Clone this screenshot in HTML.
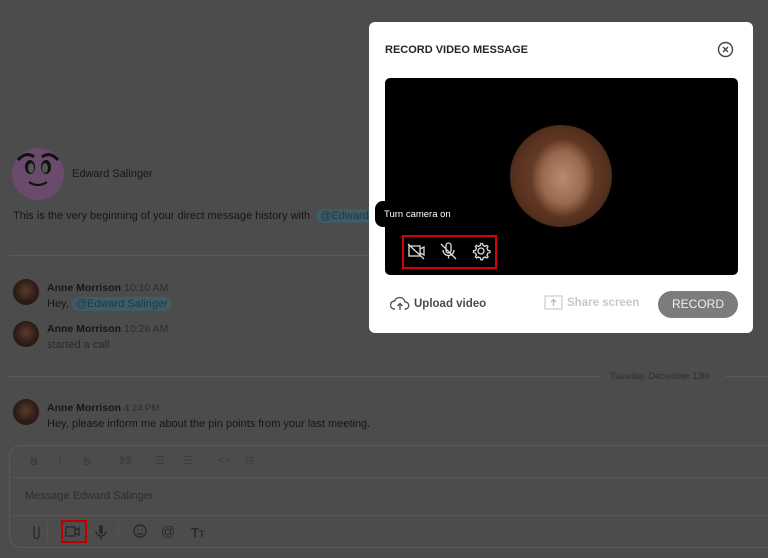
<!DOCTYPE html>
<html><head><meta charset="utf-8"><style>
body{margin:0;width:768px;height:558px;background:#4c4c4c;font-family:"Liberation Sans",sans-serif;position:relative;overflow:hidden;color:#161616}
.a{position:absolute}
.t{font-size:11px;white-space:nowrap}
.mention{background:#3f5b63;color:#1b3d47;border-radius:8px;padding:1px 4px}
.av{width:26px;height:26px;border-radius:50%;background:radial-gradient(circle at 50% 45%,#5a3a2c 0,#2e1d16 55%,#1a1210 100%)}
.ic{stroke:#2a2a2a;fill:none;stroke-width:1.4}
</style></head><body>
<div class="a" style="left:12px;top:148px;width:52px;height:52px;border-radius:50%;background:#6b4b6b"></div>
<svg class="a" style="left:12px;top:148px" width="52" height="52"><path d="M6 12 Q14 3 22 9 M30 9 Q38 3 46 12" stroke="#111" stroke-width="3" fill="none"/><ellipse cx="18" cy="19" rx="5" ry="7" fill="#111"/><ellipse cx="34" cy="19" rx="5" ry="7" fill="#111"/><ellipse cx="19" cy="20" rx="3" ry="5" fill="#555"/><ellipse cx="33" cy="20" rx="3" ry="5" fill="#555"/><path d="M17 34 Q26 40 35 34" stroke="#111" stroke-width="2" fill="none"/></svg>
<div class="a t" style="left:72px;top:168px;font-size:11px">Edward Salinger</div>
<div class="a t" style="left:13px;top:210px">This is the very beginning of your direct message history with &nbsp;<span class="mention">@Edward</span></div>
<div class="a" style="left:10px;top:255px;width:360px;height:1px;background:#595959"></div>
<div class="av a" style="left:13px;top:279px"></div>
<div class="a t" style="left:47px;top:282px;font-weight:bold;font-size:10.5px">Anne Morrison <span style="font-weight:normal;color:#2c2c2c">10:10 AM</span></div>
<div class="a t" style="left:47px;top:298px">Hey, <span class="mention">@Edward Salinger</span></div>
<div class="av a" style="left:13px;top:321px"></div>
<div class="a t" style="left:47px;top:323px;font-weight:bold;font-size:10.5px">Anne Morrison <span style="font-weight:normal;color:#2c2c2c">10:26 AM</span></div>
<div class="a t" style="left:47px;top:339px;color:#2a2a2a">started a call</div>
<div class="a" style="left:8px;top:376px;width:592px;height:1px;background:#595959"></div>
<div class="a t" style="left:610px;top:371px;font-size:9px;color:#2e2e2e">Tuesday, December 13th</div>
<div class="a" style="left:725px;top:376px;width:43px;height:1px;background:#595959"></div>
<div class="av a" style="left:13px;top:399px"></div>
<div class="a t" style="left:47px;top:402px;font-weight:bold;font-size:10.5px">Anne Morrison <span style="font-weight:normal;color:#2c2c2c;font-size:9.5px">4:24 PM</span></div>
<div class="a t" style="left:47px;top:418px">Hey, please inform me about the pin points from your last meeting.</div>
<div class="a" style="left:9px;top:445px;width:780px;height:101px;border:1px solid #5a5a5a;border-radius:12px"></div>
<div class="a" style="left:10px;top:477px;width:760px;height:1px;background:#555"></div>
<div class="a" style="left:10px;top:515px;width:760px;height:1px;background:#555"></div>
<div class="a t" style="left:30px;top:456px;color:#3c3c3c;font-weight:bold">B</div>
<div class="a t" style="left:58px;top:456px;color:#3c3c3c;font-style:italic;font-family:'Liberation Serif'">I</div>
<div class="a t" style="left:83px;top:456px;color:#3c3c3c;text-decoration:line-through">S</div>
<div class="a t" style="left:119px;top:455px;color:#3c3c3c;font-weight:bold">99</div>
<div class="a t" style="left:155px;top:454px;color:#3c3c3c">☰</div>
<div class="a t" style="left:183px;top:454px;color:#3c3c3c">☰</div>
<div class="a t" style="left:218px;top:455px;color:#3c3c3c">&lt;&gt;</div>
<div class="a t" style="left:245px;top:454px;color:#3c3c3c">⊟</div>
<div class="a t" style="left:25px;top:490px;color:#2e2e2e">Message Edward Salinger</div>
<svg class="a" style="left:28px;top:522px" width="200" height="20"><path class="ic" d="M8 4 v10 a2.5 2.5 0 0 0 5 0 v-9" transform="translate(-2,0)"/>
<rect x="38" y="5" width="9" height="9" class="ic"/><path d="M47 8 l4 -2 v7 l-4 -2" class="ic"/>
<rect x="71" y="3" width="4" height="9" rx="2" fill="#2a2a2a"/><path d="M68 9 a5 5 0 0 0 10 0 M73 14 v4" class="ic"/>
<circle cx="112" cy="9" r="6" class="ic"/><circle cx="110" cy="8" r=".8" fill="#2a2a2a"/><circle cx="114" cy="8" r=".8" fill="#2a2a2a"/><path d="M109 11 q3 2.5 6 0" class="ic"/>
<text x="133" y="14" font-size="14" fill="#2a2a2a" font-family="Liberation Sans">@</text>
<text x="163" y="15" font-size="13" font-weight="bold" fill="#2a2a2a" font-family="Liberation Sans">T</text><text x="171" y="15" font-size="9" font-weight="bold" fill="#2a2a2a" font-family="Liberation Sans">T</text></svg>
<div class="a" style="left:61px;top:520px;width:22px;height:19px;border:2px solid #c00000"></div>
<div class="a" style="left:47px;top:522px;width:1px;height:18px;background:#555"></div>
<div class="a" style="left:118px;top:522px;width:1px;height:18px;background:#555"></div>
<div class="a" style="left:369px;top:22px;width:384px;height:311px;background:#fff;border-radius:6px"></div>
<div class="a t" style="left:385px;top:44px;font-weight:bold;font-size:11px;color:#262626">RECORD VIDEO MESSAGE</div>
<svg class="a" style="left:717px;top:41px" width="17" height="17"><circle cx="8.5" cy="8.5" r="7" stroke="#444" stroke-width="1.4" fill="none"/><path d="M6 6 l5 5 M11 6 l-5 5" stroke="#444" stroke-width="1.4"/></svg>
<div class="a" style="left:385px;top:78px;width:353px;height:197px;background:#000;border-radius:5px"></div>
<div class="a" style="left:510px;top:125px;width:102px;height:102px;border-radius:50%;background:radial-gradient(ellipse 45% 55% at 52% 52%,#b98a70 0,#9a6a50 45%,transparent 70%),radial-gradient(circle at 50% 50%,#7a4a2c 0,#5a3320 60%,#2a1a10 100%)"></div>
<div class="a" style="left:375px;top:201px;width:80px;height:26px;background:#000;border-radius:8px"></div>
<div class="a t" style="left:384px;top:209px;color:#fff;font-size:9.5px">Turn camera on</div>
<div class="a" style="left:402px;top:235px;width:91px;height:30px;border:2px solid #d00"></div>
<svg class="a" style="left:404px;top:237px" width="90" height="30"><g stroke="#ddd" stroke-width="1.3" fill="none"><rect x="5" y="9" width="11" height="10"/><path d="M16 12 l4 -2 v8 l-4 -2 M4 7 l16 15"/>
<rect x="42" y="6" width="5" height="10" rx="2.5"/><path d="M39 13 a5.5 5.5 0 0 0 11 0 M44.5 18.5 v3 M37 7 l15 15"/>
<circle cx="77" cy="14" r="3"/><path d="M77 6.5 l1.5 0 l.6 2 l2 .9 l1.8-1 l1.1 1.1 -1 1.8 .9 2 2 .6 v1.6 l-2 .6 -.9 2 1 1.8 -1.1 1.1 -1.8-1 -2 .9 -.6 2 h-1.6 l-.6-2 -2-.9 -1.8 1 -1.1-1.1 1-1.8 -.9-2 -2-.6 v-1.6 l2-.6 .9-2 -1-1.8 1.1-1.1 1.8 1 2-.9 .6-2z"/></g></svg>
<svg class="a" style="left:390px;top:296px" width="20" height="16"><path d="M5 13 h-0.5 a4 4 0 0 1 0-8 a5.5 5.5 0 0 1 10.5 1 a3.5 3.5 0 0 1 0.5 7 h-1" stroke="#555" stroke-width="1.4" fill="none"/><path d="M10 14 v-6 M7.5 10 l2.5-2.5 2.5 2.5" stroke="#555" stroke-width="1.4" fill="none"/></svg>
<div class="a t" style="left:414px;top:298px;font-weight:bold;font-size:11.5px;color:#4a4a4a">Upload video</div>
<svg class="a" style="left:544px;top:295px" width="20" height="16"><rect x="1" y="1" width="17" height="13" stroke="#ccc" stroke-width="1.2" fill="none"/><path d="M9.5 11 v-6 M7 7 l2.5-2.5 2.5 2.5" stroke="#bbb" stroke-width="1.3" fill="none"/></svg>
<div class="a t" style="left:567px;top:297px;font-weight:bold;font-size:11.5px;color:#c8c8c8">Share screen</div>
<div class="a" style="left:658px;top:291px;width:80px;height:27px;background:#7c7c7c;border-radius:14px;color:#eee;font-size:12px;text-align:center;line-height:27px">RECORD</div>
</body></html>
